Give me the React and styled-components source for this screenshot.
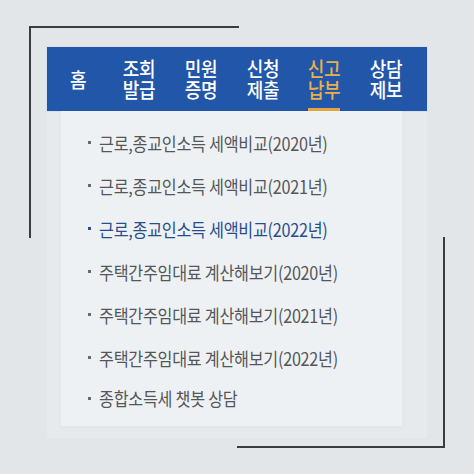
import React from "react";
import styled, { createGlobalStyle } from "styled-components";

const Global = createGlobalStyle`
  html, body { margin: 0; padding: 0; background: #e3e6e8; }
  body { font-family: "Noto Sans CJK KR", "Noto Sans", sans-serif; }
`;

const Page = styled.div`
  position: relative;
  width: 474px;
  height: 474px;
  box-sizing: border-box;
  padding: 47px 47px 0 47px;
  background: #e3e6e8;

  &::before {
    content: "";
    position: absolute;
    left: 29px;
    top: 26px;
    width: 208px;
    height: 210px;
    border-top: 2px solid #3a3c3e;
    border-left: 2px solid #3a3c3e;
  }
  &::after {
    content: "";
    position: absolute;
    left: 237px;
    top: 237px;
    width: 206px;
    height: 209px;
    border-bottom: 2px solid #3a3c3e;
    border-right: 2px solid #3a3c3e;
  }
`;

const Panel = styled.div`
  width: 380px;
  background: #e7eaec;
  padding-bottom: 12px;
`;

const Nav = styled.nav`
  height: 64px;
  background: #2156a8;
  display: grid;
  grid-template-columns: repeat(6, 61.6px);
  align-items: stretch;
  box-shadow: 0 0 0 1px #d7e0ee;
`;

const NavItem = styled.div`
  position: relative;
  display: flex;
  flex-direction: column;
  align-items: center;
  justify-content: center;
  text-align: center;
  font-size: 20px;
  font-weight: 500;
  letter-spacing: -0.5px;
  color: ${(p) => (p.$active ? "#eab04c" : "#ffffff")};

  &::after {
    content: "";
    display: ${(p) => (p.$active ? "block" : "none")};
    position: absolute;
    left: 50%;
    bottom: 0;
    width: 32px;
    margin-left: -16px;
    height: 3px;
    background: #e5a53e;
  }
`;

const NavLine = styled.span`
  display: block;
  height: 21px;
  line-height: 21px;
  transform: scaleX(0.9);
`;

const Body = styled.div`
  padding: 0 25px 0 14px;
`;

const Card = styled.ul`
  margin: 0;
  list-style: none;
  background: #eef1f3;
  height: 315px;
  box-sizing: border-box;
  padding: 10px 0 0 27px;
  box-shadow: 0 2px 6px rgba(0, 0, 0, 0.03);
`;

const Item = styled.li`
  display: flex;
  align-items: center;
  gap: 8px;
  height: ${(p) => (p.$last ? 38 : 43)}px;
  color: ${(p) => (p.$active ? "#284d8c" : "#545659")};

  &::before {
    content: "";
    width: 3px;
    height: 3px;
    background: ${(p) => (p.$active ? "#284d8c" : "#66686b")};
    flex: none;
  }
`;

const ItemText = styled.span`
  display: inline-block;
  white-space: nowrap;
  font-size: 18px;
  letter-spacing: -0.3px;
  transform: scaleX(0.9);
  transform-origin: left center;
`;

const navItems = [
  ["홈"],
  ["조회", "발급"],
  ["민원", "증명"],
  ["신청", "제출"],
  ["신고", "납부"],
  ["상담", "제보"],
];

const items = [
  "근로,종교인소득 세액비교(2020년)",
  "근로,종교인소득 세액비교(2021년)",
  "근로,종교인소득 세액비교(2022년)",
  "주택간주임대료 계산해보기(2020년)",
  "주택간주임대료 계산해보기(2021년)",
  "주택간주임대료 계산해보기(2022년)",
  "종합소득세 챗봇 상담",
];

export default function App() {
  return (
    <>
      <Global />
      <Page>
        <Panel>
          <Nav>
            {navItems.map((lines, i) => (
              <NavItem key={i} $active={i === 4}>
                {lines.map((l, j) => (
                  <NavLine key={j}>{l}</NavLine>
                ))}
              </NavItem>
            ))}
          </Nav>
          <Body>
            <Card>
              {items.map((t, i) => (
                <Item key={i} $active={i === 2} $last={i === items.length - 1}>
                  <ItemText>{t}</ItemText>
                </Item>
              ))}
            </Card>
          </Body>
        </Panel>
      </Page>
    </>
  );
}
